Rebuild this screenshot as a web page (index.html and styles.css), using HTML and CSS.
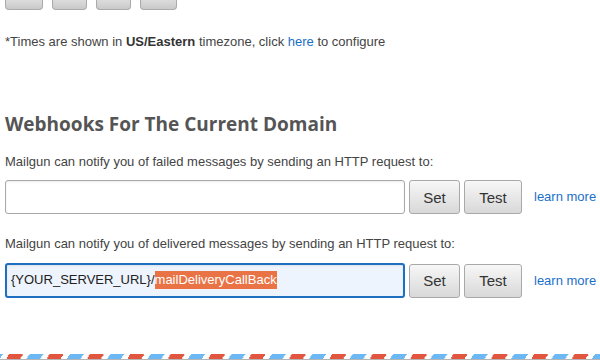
FILE: index.html
```html
<!DOCTYPE html>
<html lang="en">

<head>
    <meta charset="UTF-8">
    <title>Webhooks</title>
    <link rel="stylesheet" href="styles.css">
</head>

<body>
    <!-- Pager buttons cut off at the top -->
    <div class="pager">
        <span class="pager-btn w38"></span>
        <span class="pager-btn w35"></span>
        <span class="pager-btn w35"></span>
        <span class="pager-btn w37"></span>
    </div>

    <p class="tz-note">*Times are shown in <strong>US/Eastern</strong> timezone, click <a href="#">here</a> to configure</p>

    <h2 class="section-title">Webhooks For The Current Domain</h2>

    <!-- Failed messages webhook -->
    <p class="hook-label">Mailgun can notify you of failed messages by sending an HTTP request to:</p>
    <div class="hook-row">
        <div class="hook-input"></div>
        <button class="btn btn-set">Set</button>
        <button class="btn btn-test">Test</button>
        <a class="learn" href="#">learn more</a>
    </div>

    <!-- Delivered messages webhook -->
    <p class="hook-label second">Mailgun can notify you of delivered messages by sending an HTTP request to:</p>
    <div class="hook-row tall">
        <div class="hook-input focused">{YOUR_SERVER_URL}/<span class="sel">mailDeliveryCallBack</span></div>
        <button class="btn btn-set">Set</button>
        <button class="btn btn-test">Test</button>
        <a class="learn" href="#">learn more</a>
    </div>

    <!-- Airmail stripe -->
    <div class="stripe"></div>
</body>

</html>
```

FILE: styles.css
```css
/* Page */
body {
    margin: 0;
    padding: 0 0 0 5px;
    width: 595px;
    height: 360px;
    overflow: hidden;
    position: relative;
    font-family: "Liberation Sans", Arial, sans-serif;
    font-size: 13px;
    color: #444;
    background: #fff;
}

/* Pager buttons */
.pager {
    display: flex;
    gap: 9px;
    height: 10px;
}

.pager-btn {
    display: block;
    height: 9px;
    border: 1px solid #aaa;
    border-top: none;
    border-radius: 0 0 4px 4px;
    background: linear-gradient(#dcdcdc, #c9c9c9);
}

.w38 { width: 36px; }
.w35 { width: 33px; }
.w37 { width: 35px; }

/* Timezone note */
.tz-note {
    margin: 24px 0 0;
    line-height: 15px;
}

.tz-note strong {
    color: #333;
}

a {
    color: #1a6fc9;
    text-decoration: none;
}

/* Heading */
.section-title {
    margin: 62px 0 0;
    font-family: "Open Sans", sans-serif;
    font-weight: 700;
    font-size: 19px;
    line-height: 26px;
    color: #555;
}

/* Webhook rows */
.hook-label {
    margin: 17px 0 0;
    line-height: 15px;
}

.hook-label.second {
    margin-top: 22px;
}

.hook-row {
    display: flex;
    align-items: center;
    margin-top: 11px;
    height: 34px;
}

.hook-row.tall {
    margin-top: 12px;
    height: 35px;
}

.hook-input {
    box-sizing: border-box;
    width: 400px;
    height: 34px;
    border: 1px solid #a8a8a8;
    border-radius: 3px;
    background: #fff;
    box-shadow: inset 0 1px 2px rgba(0, 0, 0, 0.08);
    padding: 0 5px;
    line-height: 31px;
    color: #222;
}

.hook-input.focused {
    border: 2px solid #1f6fc0;
    background: #eef4fd;
    line-height: 29px;
    padding-left: 4px;
    height: 35px;
}

.sel {
    background: #ea7346;
    color: #fff;
    padding: 1px 0 2px;
}

.btn {
    box-sizing: border-box;
    height: 34px;
    margin-left: 4px;
    border: 1px solid #a9a9a9;
    border-radius: 3px;
    background: linear-gradient(#f7f7f7, #d8d8d8);
    font-family: "Liberation Sans", Arial, sans-serif;
    font-size: 15px;
    color: #333;
    padding: 0;
}

.btn-set {
    width: 51px;
}

.btn-test {
    width: 58px;
}

.learn {
    margin-left: 12px;
    font-size: 13px;
    margin-bottom: 1px;
}

/* Airmail stripe at the bottom */
.stripe {
    position: absolute;
    left: 0;
    bottom: 0;
    width: 600px;
    height: 5px;
    border-bottom: 1px solid #b5b5b5;
    background: repeating-linear-gradient(-60deg,
            #6bb8f5 0, #6bb8f5 12px,
            transparent 12px, transparent 17.5px,
            #e25640 17.5px, #e25640 29.5px,
            transparent 29.5px, transparent 35px);
    background-size: 40.4px 100%;
}
```
